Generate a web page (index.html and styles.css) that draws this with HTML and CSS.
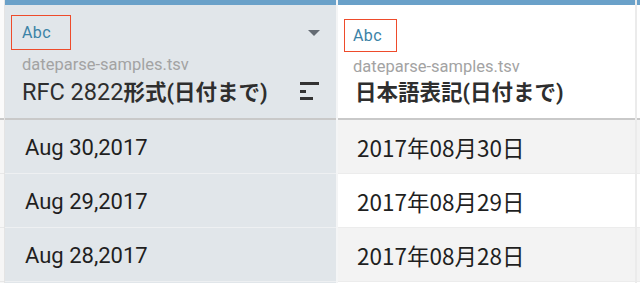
FILE: index.html
```html
<!DOCTYPE html>
<html lang="ja">
<head>
<meta charset="utf-8">
<link rel="stylesheet" href="styles.css">
</head>
<body>
<div class="grid">
  <div class="strip">
    <div class="strip-head"></div>
    <div class="strip-cell"></div>
    <div class="strip-cell"></div>
    <div class="strip-cell"></div>
  </div>
  <div class="col col-a">
    <div class="head">
      <div class="head-top">
        <span class="type">Abc</span>
        <span class="caret"></span>
      </div>
      <div class="source">dateparse-samples.tsv</div>
      <div class="title-row">
        <span class="title"><span class="lat">RFC 2822</span><b>形式(日付まで)</b></span>
        <svg class="sort" width="20" height="19" viewBox="0 0 20 19">
          <rect x="0" y="0" width="19" height="3" fill="#333"/>
          <rect x="0" y="8" width="6" height="3" fill="#333"/>
          <rect x="0" y="15" width="13" height="3" fill="#333"/>
        </svg>
      </div>
    </div>
    <div class="cell">Aug 30,2017</div>
    <div class="cell">Aug 29,2017</div>
    <div class="cell">Aug 28,2017</div>
  </div>
  <div class="col col-b">
    <div class="head">
      <div class="head-top">
        <span class="type type-b">Abc</span>
      </div>
      <div class="source">dateparse-samples.tsv</div>
      <div class="title-row">
        <span class="title title-b">日本語表記(日付まで)</span>
      </div>
    </div>
    <div class="cell jp odd">2017年08月30日</div>
    <div class="cell jp even">2017年08月29日</div>
    <div class="cell jp odd">2017年08月28日</div>
  </div>
  <div class="col col-c">
    <div class="head"></div>
    <div class="cell odd"></div>
    <div class="cell even"></div>
    <div class="cell odd"></div>
  </div>
</div>
</body>
</html>
```
FILE: styles.css
```css
* { box-sizing: border-box; }
html, body { margin: 0; padding: 0; }
body {
  width: 640px;
  height: 283px;
  overflow: hidden;
  background: #ffffff;
  font-family: Roboto, "Noto Sans CJK JP", sans-serif;
  color: #2e2e2e;
}
.grid {
  display: flex;
  height: 283px;
}
.strip {
  width: 5px;
  flex: none;
  display: flex;
  flex-direction: column;
  background: #f6f6f6;
  border-right: 1px solid #e4e4e4;
}
.strip-head {
  height: 120px;
  border-bottom: 2px solid #c9c9c9;
  background: #fbfbfb;
}
.strip-cell {
  height: 54px;
  border-bottom: 1px solid #e8e8e8;
}
.col {
  display: flex;
  flex-direction: column;
  flex: none;
}
.col-a { width: 333px; background: #e1e6ea; border-right: 2px solid #f4f5f6; }
.col-b { width: 299px; background: #ffffff; border-right: 2px solid #ebebeb; }
.col-c { flex: 1; background: #ffffff; }
.head {
  height: 120px;
  border-top: 5px solid #6aa1c9;
  border-bottom: 2px solid #c9c9c9;
  padding: 10px 0 0 6px;
  display: flex;
  flex-direction: column;
}
.col-b .head { padding-left: 6px; padding-top: 13px; }
.head-top {
  display: flex;
  align-items: center;
  justify-content: space-between;
  height: 35px;
  padding-right: 16px;
}
.type {
  display: flex;
  align-items: center;
  width: 60px;
  height: 35px;
  padding-left: 10px;
  border: 1.5px solid #ee4b2b;
  color: #3b82a6;
  font-size: 16px;
  letter-spacing: 0.4px;
}
.type-b { width: 53px; padding-left: 8px; height: 33px; }
.caret {
  width: 0; height: 0;
  border-left: 6.5px solid transparent;
  border-right: 6.5px solid transparent;
  border-top: 6px solid #646b73;
}
.source {
  margin-top: 5px;
  padding-left: 11px;
  font-size: 16.5px;
  color: #a3a3a3;
  line-height: 19px;
}
.col-b .source { padding-left: 9px; margin-top: 4px; }
.title-row {
  display: flex;
  align-items: center;
  justify-content: space-between;
  padding: 5px 16px 0 11px;
}
.col-b .title-row { padding-left: 11px; padding-top: 4px; }
.title {
  font-size: 21.5px;
  line-height: 26px;
  color: #2e2e2e;
  white-space: nowrap;
}
.title .lat { font-size: 23.5px; }
.title b { font-weight: 700; }
.title-b { font-weight: 700; font-size: 21.5px; }
.sort { display: block; margin-top: -2px; }
.cell {
  height: 54px;
  border-bottom: 1px solid #eef0f2;
  display: flex;
  align-items: center;
  padding-left: 20px;
  padding-top: 2px;
  font-size: 22px;
  color: #1f1f1f;
  white-space: nowrap;
}
.jp {
  font-family: "Noto Sans CJK JP", sans-serif;
  font-size: 22.5px;
  padding-left: 19px;
  padding-top: 1px;
}
.odd { background: #f3f3f3; border-bottom: 1px solid #ececec; }
.even { background: #ffffff; border-bottom: 1px solid #ececec; }
```
